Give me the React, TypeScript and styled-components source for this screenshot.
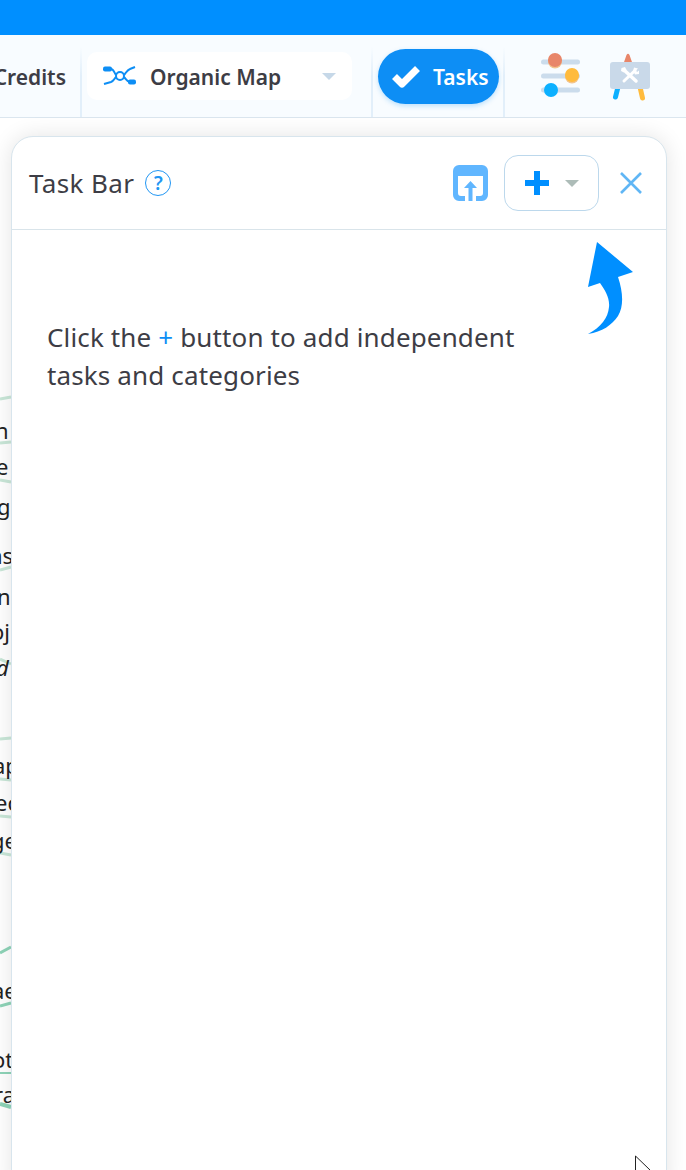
import styled, { createGlobalStyle } from 'styled-components';

const GlobalStyle = createGlobalStyle`
    html, body {
        margin: 0;
        padding: 0;
        background: #fff;
    }
    body {
        font-family: "Noto Sans", "Open Sans", sans-serif;
        color: #3d3d45;
    }
`

const Page = styled.div`
    position: relative;
    width: 686px;
    height: 1170px;
    overflow: hidden;
    background: #fff;
`
const TopBar = styled.div`
    height: 35px;
    background: #008fff;
`
const Header = styled.header`
    display: flex;
    align-items: center;
    height: 82px;
    background: #f8fcff;
    border-bottom: 1px solid #dbe6ef;
`
const Tab = styled.div<{ $width: number }>`
    display: flex;
    align-items: center;
    justify-content: flex-end;
    align-self: stretch;
    box-sizing: border-box;
    flex: 0 0 ${p => p.$width}px;
    overflow: hidden;
    border-right: 2px solid;
    border-image: linear-gradient(to bottom, transparent 15%, #e2effa 50%, #e2effa) 1;
    white-space: nowrap;
`
const CreditsLabel = styled.span`
    padding: 2px 14px 0 0;
    font-size: 21px;
    font-weight: 600;
    color: #3d3d45;
`
const MapSelect = styled.div`
    display: flex;
    align-items: center;
    box-sizing: border-box;
    flex: 0 0 265px;
    height: 48px;
    margin-left: 5px;
    padding: 0 16px;
    background: #fff;
    border-radius: 10px;
    font-size: 21px;
    font-weight: 600;
    color: #3d3d45;
`
const MapName = styled.span`
    flex: 1;
    margin-left: 13px;
    padding-top: 2px;
`
const Caret = styled.span<{ $color: string; $w: number }>`
    width: 0;
    height: 0;
    border-left: ${p => p.$w}px solid transparent;
    border-right: ${p => p.$w}px solid transparent;
    border-top: ${p => p.$w}px solid ${p => p.$color};
`
const TasksButton = styled.div`
    display: flex;
    align-items: center;
    gap: 12px;
    box-sizing: border-box;
    flex: 0 0 121px;
    height: 55px;
    margin-left: 5px;
    padding-left: 13px;
    background: #0d8ef5;
    border-radius: 28px;
    box-shadow: 0 2px 5px rgba(13, 142, 245, 0.25);
    color: #fff;
    font-size: 21px;
    font-weight: 600;
`
const TasksLabel = styled.span`
    padding-top: 2px;
`
const ToolIcons = styled.div`
    display: flex;
    align-items: center;
    gap: 28px;
    margin-left: 34px;
`
const MapCanvas = styled.div`
    position: absolute;
    left: 0;
    top: 118px;
    width: 12px;
    height: 1052px;
    overflow: hidden;
`
const MapLines = styled.svg`
    position: absolute;
    left: 0;
    top: 0;
`
const NodeText = styled.span<{ $x: number; $y: number; $italic?: boolean }>`
    position: absolute;
    left: ${p => p.$x}px;
    top: ${p => p.$y}px;
    font-size: 22px;
    line-height: 28px;
    font-style: ${p => (p.$italic ? 'italic' : 'normal')};
    color: #222;
    white-space: nowrap;
`
const Panel = styled.section`
    position: absolute;
    left: 11px;
    top: 136px;
    box-sizing: border-box;
    width: 656px;
    height: 1060px;
    background: #fff;
    border: 1px solid #d8e5ed;
    border-radius: 22px;
    box-shadow: 0 0 22px rgba(0, 0, 0, 0.11);
`
const PanelHead = styled.div`
    display: flex;
    align-items: center;
    box-sizing: border-box;
    height: 93px;
    padding: 0 24px 0 17px;
    border-bottom: 1px solid #d9e4ea;
`
const Title = styled.h2`
    margin: 0;
    font-size: 26px;
    font-weight: 400;
    letter-spacing: 0.4px;
    color: #3d3d45;
`
const HelpBadge = styled.span`
    display: flex;
    align-items: center;
    justify-content: center;
    box-sizing: border-box;
    width: 26px;
    height: 26px;
    margin-left: 11px;
    border: 1.5px solid #2196f3;
    border-radius: 50%;
    font-size: 19px;
    font-weight: 600;
    color: #2196f3;
`
const HeadActions = styled.div`
    display: flex;
    align-items: center;
    margin-left: auto;
`
const AddButton = styled.div`
    display: flex;
    align-items: center;
    box-sizing: border-box;
    width: 95px;
    height: 56px;
    margin: 0 21px 0 16px;
    padding-left: 19px;
    gap: 15px;
    border: 1px solid #bcd8ec;
    border-radius: 14px;
`
const Hint = styled.p`
    margin: 0;
    padding: 88px 100px 0 35px;
    font-size: 26px;
    line-height: 38px;
    letter-spacing: 0.14px;
    color: #3d3d45;
`
const PlusText = styled.span`
    color: #0d8ef5;
`
const HintArrow = styled.svg`
    position: absolute;
    left: 573px;
    top: 103px;
`
const Pointer = styled.svg`
    position: absolute;
    left: 634px;
    top: 1155px;
`

const fragments = [
    { t: 'n', x: -5, y: 298 },
    { t: 'e', x: -4, y: 334 },
    { t: 'g', x: -3, y: 374 },
    { t: 'ns', x: -11, y: 423 },
    { t: 'n', x: -3, y: 464 },
    { t: 'oj', x: -9, y: 499 },
    { t: 'd', x: -4, y: 535, italic: true },
    { t: 'ap', x: -7, y: 633 },
    { t: 'ec', x: -5, y: 670 },
    { t: 'ge', x: -9, y: 708 },
    { t: 'ae', x: -8, y: 858 },
    { t: 'ot', x: -8, y: 927 },
    { t: 'ra', x: -6, y: 962 },
]

const lines = [
    { d: 'M0 281 L11 279', c: '#c9e7d8', w: 3 },
    { d: 'M0 325 L11 324', c: '#c9e7d8', w: 3 },
    { d: 'M0 362 L11 364', c: '#c9e7d8', w: 3 },
    { d: 'M0 452 L11 449', c: '#c9e7d8', w: 3 },
    { d: 'M0 541 L11 546', c: '#c9e7d8', w: 3 },
    { d: 'M0 621 L11 620', c: '#c9e7d8', w: 3 },
    { d: 'M0 661 L11 662', c: '#c9e7d8', w: 3 },
    { d: 'M0 698 L11 699', c: '#c9e7d8', w: 3 },
    { d: 'M0 735 L11 737', c: '#c9e7d8', w: 3 },
    { d: 'M0 835 L11 829', c: '#8ed4b8', w: 3 },
    { d: 'M0 888 L11 885', c: '#8ed4b8', w: 3 },
    { d: 'M0 955 L11 955', c: '#8ed4b8', w: 2 },
    { d: 'M0 986 L11 989', c: '#8ed4b8', w: 4 },
]

const App = () => {
    return (
        <Page>
            <GlobalStyle />
            <TopBar />
            <Header>
                <Tab $width={82}>
                    <CreditsLabel>Credits</CreditsLabel>
                </Tab>
                <MapSelect>
                    <svg width="34" height="20" viewBox="0 0 34 20" fill="none" stroke="#0d8ef5">
                        <path d="M2 3 H8 C11 3 11 7 13 9 M21 9 C23 7 24 4 27 3 L32 1" strokeWidth="2" />
                        <path d="M1 18 L8 16 C11 15 11 13 13 11 M21 11 C23 13 24 16 27 16 H31" strokeWidth="2" />
                        <circle cx="17" cy="10" r="4" fill="#fff" strokeWidth="2" />
                        <rect x="0" y="0.5" width="9" height="5" rx="2" fill="#0d8ef5" stroke="none" />
                        <rect x="25" y="13.5" width="8" height="5" rx="2" fill="#0d8ef5" stroke="none" />
                    </svg>
                    <MapName>Organic Map</MapName>
                    <Caret $color="#c6d8e8" $w={7} />
                </MapSelect>
                <Tab $width={21} />
                <TasksButton>
                    <svg width="30" height="24" viewBox="0 0 30 24" fill="none">
                        <path d="M3.5 12.5 L11 20 L26.5 4.5" stroke="#fff" strokeWidth="7" strokeLinejoin="round" />
                    </svg>
                    <TasksLabel>Tasks</TasksLabel>
                </TasksButton>
                <Tab $width={6} />
                <ToolIcons>
                    <svg width="42" height="50" viewBox="0 0 42 50">
                        <rect x="2" y="8.5" width="39" height="5" rx="2.5" fill="#cbdcec" />
                        <rect x="2" y="22.5" width="39" height="5" rx="2.5" fill="#cbdcec" />
                        <rect x="2" y="36.5" width="39" height="5" rx="2.5" fill="#cbdcec" />
                        <circle cx="16" cy="10.5" r="7" fill="#f2c48e" />
                        <circle cx="16" cy="9" r="7" fill="#e8866a" />
                        <circle cx="33" cy="25.5" r="7" fill="#f2c48e" />
                        <circle cx="33" cy="24" r="7" fill="#ffbb3d" />
                        <circle cx="12" cy="39" r="7" fill="#0cb0ff" />
                    </svg>
                    <svg width="42" height="50" viewBox="0 0 42 50" fill="none">
                        <path d="M14 14 L17.5 4 Q19 1.5 20.5 4 L24 14 Z" fill="#e8866a" />
                        <path d="M9 36 L6.5 46" stroke="#0cb0ff" strokeWidth="5" strokeLinecap="round" />
                        <path d="M31 36 L33.5 47" stroke="#ffbb3d" strokeWidth="5" strokeLinecap="round" />
                        <rect x="1" y="11" width="40" height="27" rx="3" fill="#c9d9e9" />
                        <path d="M15 19 L27 30" stroke="#fff" strokeWidth="3.5" strokeLinecap="round" />
                        <path d="M26 19.5 L15 30" stroke="#fff" strokeWidth="3" strokeLinecap="round" />
                        <path d="M12.5 17 L16 16 L17.5 19 L15 21.5 L12 20 Z" fill="#fff" />
                        <path d="M24 20 L25 16.5 L29 17.5 L27 19.5 L28 21 L30 19.5 L30 23 L26 23.5 Z" fill="#fff" />
                    </svg>
                </ToolIcons>
            </Header>

            <MapCanvas>
                <MapLines width="12" height="1052">
                    {lines.map(l => (
                        <path key={l.d} d={l.d} stroke={l.c} strokeWidth={l.w} fill="none" />
                    ))}
                </MapLines>
                {fragments.map(f => (
                    <NodeText key={f.t + f.y} $x={f.x} $y={f.y} $italic={f.italic}>{f.t}</NodeText>
                ))}
            </MapCanvas>

            <Panel>
                <PanelHead>
                    <Title>Task Bar</Title>
                    <HelpBadge>?</HelpBadge>
                    <HeadActions>
                        <svg width="35" height="36" viewBox="0 0 35 36" fill="none">
                            <path d="M6 0 H29 A6 6 0 0 1 35 6 V30 A6 6 0 0 1 29 36 H23 V31 H27 A3 3 0 0 0 30 28 V11 H5 V28 A3 3 0 0 0 8 31 H12 V36 H6 A6 6 0 0 1 0 30 V6 A6 6 0 0 1 6 0 Z" fill="#60b6ff" />
                            <path d="M15.5 36 V23 H11 L17.5 16 L24 23 H19.5 V36 Z" fill="#60b6ff" />
                        </svg>
                        <AddButton>
                            <svg width="26" height="26" viewBox="0 0 26 26">
                                <path d="M13 1 V25 M1 13 H25" stroke="#008fff" strokeWidth="6" />
                            </svg>
                            <Caret $color="#adbcb8" $w={7} />
                        </AddButton>
                        <svg width="22" height="22" viewBox="0 0 22 22">
                            <path d="M1 1 L21 21 M21 1 L1 21" stroke="#60b6f5" strokeWidth="2.6" />
                        </svg>
                    </HeadActions>
                </PanelHead>
                <Hint>
                    Click the <PlusText>+</PlusText> button to add independent tasks and categories
                </Hint>
                <HintArrow width="48" height="94" viewBox="0 0 48 94">
                    <path d="M12 2 L48 32 L33 37 C38 52 39 66 33 76 C27 85 17 92 3 94 C16 87 23 78 24 67 C25 58 20 50 15 43 L3 47 Z" fill="#008fff" />
                </HintArrow>
            </Panel>

            <Pointer width="18" height="16" viewBox="0 0 18 16" fill="none">
                <path d="M1.5 16 V1 L16 15" stroke="#222" strokeWidth="1" />
            </Pointer>
        </Page>
    )
}

export default App
